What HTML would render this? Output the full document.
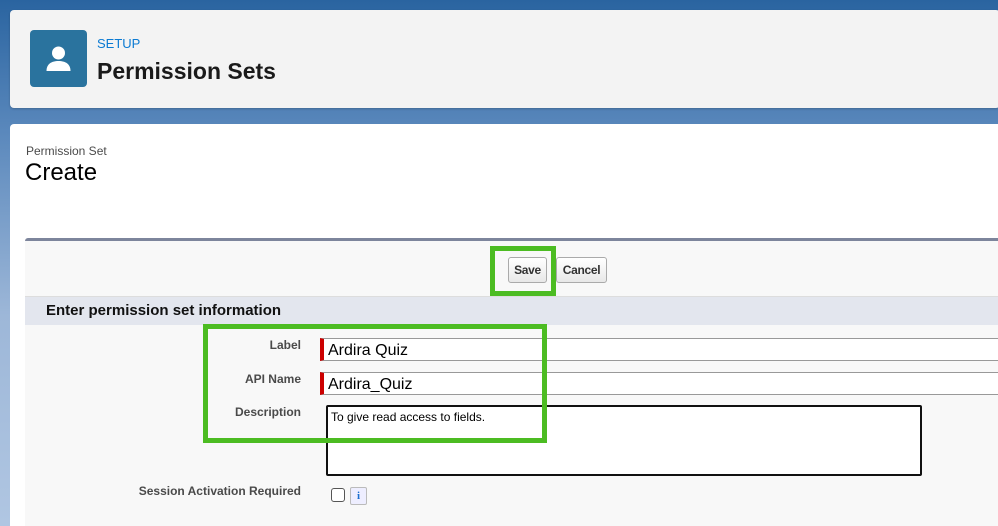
<!DOCTYPE html>
<html style="overflow:hidden;height:526px"><head><style>
body{margin:0;width:998px;height:526px;overflow:hidden;background:linear-gradient(180deg,#2a64a0 0%,#5a88bc 25%,#9db7d8 60%,#b0c6e2 100%);font-family:"Liberation Sans",Arial,sans-serif;position:relative}
.hdr{position:absolute;left:10px;top:10px;width:990px;height:98px;background:#f3f3f3;border-radius:4px;box-shadow:0 1px 2px rgba(0,0,0,.2)}
.ico{position:absolute;left:20px;top:20px;width:57px;height:57px;background:#2a739e;border-radius:4px}
.setup{position:absolute;left:87px;top:26px;font-size:13px;color:#0b7ad2}
.ps{position:absolute;left:87px;top:48px;font-size:23px;font-weight:bold;color:#1a1a1a}
.main{position:absolute;left:10px;top:124px;width:990px;height:402px;background:#fff;border-radius:4px 0 0 0;overflow:hidden}
.sub{position:absolute;left:16px;top:20px;font-size:12px;color:#4a4a4a}
.cr{position:absolute;left:15px;top:35px;font-size:24px;color:#000}
.sec{position:absolute;left:15px;top:114px;width:980px;height:300px;background:#f8f8f8;border-top:3px solid #7d859c;border-radius:3px 0 0 0}
.btn{position:absolute;top:16px;height:24px;border:1px solid #aaa;border-radius:3px;background:linear-gradient(#fff,#e8e8e8);font-size:12px;font-weight:bold;color:#333;line-height:24px;text-align:center;letter-spacing:-0.3px}
.bar{position:absolute;left:0;top:55px;width:980px;height:28px;background:#e3e6ee;border-top:1px solid #ddd}
.bar span{position:absolute;left:21px;top:5px;font-size:15px;font-weight:bold;color:#111}
.lbl{position:absolute;font-size:12px;font-weight:bold;color:#4a4a4a;text-align:right;width:300px;left:0}
.inp{position:absolute;left:300px;width:700px;height:23px;background:#fff;border:1px solid #999;border-left:4px solid #c00;font-size:16px;line-height:23px;padding-left:4px;box-sizing:border-box}
.ta{position:absolute;left:301px;top:164px;width:596px;height:71px;background:#fff;border:2px solid #111;border-radius:2px;font-size:12px;padding:3px 3px;box-sizing:border-box}
.gb{position:absolute;border:5px solid #4cbc22}
</style></head><body>
<div class="hdr"><div class="ico"><svg width="57" height="57" viewBox="0 0 57 57"><circle cx="28.5" cy="23" r="6.5" fill="#fff"/><path d="M16.5 41c0-7 5-10 12-10s12 3 12 10z" fill="#fff"/></svg></div>
<div class="setup">SETUP</div><div class="ps">Permission Sets</div></div>
<div class="main"><div class="sub">Permission Set</div><div class="cr">Create</div>
<div class="sec">
<div class="btn" style="left:483px;width:37px">Save</div>
<div class="btn" style="left:531px;width:49px;font-weight:bold">Cancel</div>
<div class="bar"><span>Enter permission set information</span></div>
<div class="lbl" style="top:97px;left:-24px">Label</div>
<div class="inp" style="top:97px;left:295px">Ardira Quiz</div>
<div class="lbl" style="top:131px;left:-24px">API Name</div>
<div class="inp" style="top:131px;left:295px">Ardira_Quiz</div>
<div class="lbl" style="top:164px;left:-24px">Description</div>
<div class="ta">To give read access to fields.</div>
<div class="lbl" style="top:243px;left:-24px">Session Activation Required</div>
<div style="position:absolute;left:306px;top:247px;width:12px;height:12px;border:1px solid #555;border-radius:3px;background:#fff"></div>
<div style="position:absolute;left:325px;top:246px;width:15px;height:16px;border:1px solid #bbb;border-radius:2px;background:#eef;color:#1a6fd0;font-size:11px;font-weight:bold;text-align:center;line-height:16px;font-family:'Liberation Serif',serif">i</div>
</div></div>
<div class="gb" style="left:490px;top:246px;width:56px;height:40px"></div>
<div class="gb" style="left:203px;top:324px;width:334px;height:109px"></div>
</body></html>
